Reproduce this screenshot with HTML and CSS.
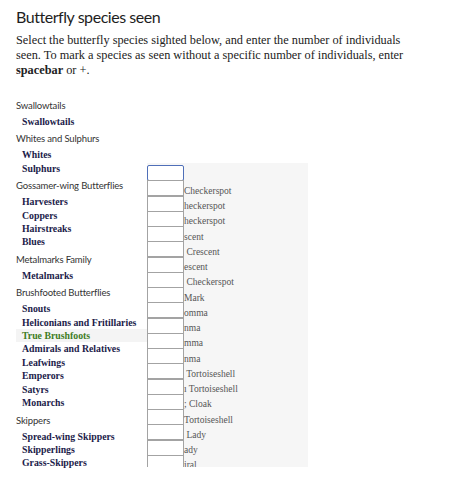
FILE: index.html
```html
<!DOCTYPE html>
<html lang="en">
<head>
<meta charset="utf-8">
<title>Butterfly species seen</title>
<link rel="stylesheet" href="styles.css">
</head>
<body>
<main class="page">
  <h1 class="title">Butterfly species seen</h1>
  <p class="intro">Select the butterfly species sighted below, and enter the number of individuals seen. To mark a species as seen without a specific number of individuals, enter <strong>spacebar</strong> or +.</p>

  <div class="picker">
    <div class="families">
      <div class="family">
        <div class="family-name">Swallowtails</div>
        <div class="sub">Swallowtails</div>
      </div>
      <div class="family">
        <div class="family-name">Whites and Sulphurs</div>
        <div class="sub">Whites</div>
        <div class="sub">Sulphurs</div>
      </div>
      <div class="family">
        <div class="family-name">Gossamer-wing Butterflies</div>
        <div class="sub">Harvesters</div>
        <div class="sub">Coppers</div>
        <div class="sub">Hairstreaks</div>
        <div class="sub">Blues</div>
      </div>
      <div class="family">
        <div class="family-name">Metalmarks Family</div>
        <div class="sub">Metalmarks</div>
      </div>
      <div class="family">
        <div class="family-name">Brushfooted Butterflies</div>
        <div class="sub">Snouts</div>
        <div class="sub">Heliconians and Fritillaries</div>
        <div class="sub sub-active">True Brushfoots</div>
        <div class="sub">Admirals and Relatives</div>
        <div class="sub">Leafwings</div>
        <div class="sub">Emperors</div>
        <div class="sub">Satyrs</div>
        <div class="sub">Monarchs</div>
      </div>
      <div class="family">
        <div class="family-name">Skippers</div>
        <div class="sub">Spread-wing Skippers</div>
        <div class="sub">Skipperlings</div>
        <div class="sub">Grass-Skippers</div>
      </div>
    </div>

    <div class="species-panel">
      <div class="species-row"><input class="count count-focus" type="text"><span class="species-name"></span></div>
      <div class="species-row"><input class="count" type="text"><span class="species-name">Checkerspot</span></div>
      <div class="species-row"><input class="count" type="text"><span class="species-name">heckerspot</span></div>
      <div class="species-row"><input class="count" type="text"><span class="species-name">heckerspot</span></div>
      <div class="species-row"><input class="count" type="text"><span class="species-name">scent</span></div>
      <div class="species-row"><input class="count" type="text"><span class="species-name"> Crescent</span></div>
      <div class="species-row"><input class="count" type="text"><span class="species-name">escent</span></div>
      <div class="species-row"><input class="count" type="text"><span class="species-name"> Checkerspot</span></div>
      <div class="species-row"><input class="count" type="text"><span class="species-name">Mark</span></div>
      <div class="species-row"><input class="count" type="text"><span class="species-name">omma</span></div>
      <div class="species-row"><input class="count" type="text"><span class="species-name">nma</span></div>
      <div class="species-row"><input class="count" type="text"><span class="species-name">mma</span></div>
      <div class="species-row"><input class="count" type="text"><span class="species-name">nma</span></div>
      <div class="species-row"><input class="count" type="text"><span class="species-name"> Tortoiseshell</span></div>
      <div class="species-row"><input class="count" type="text"><span class="species-name">ı Tortoiseshell</span></div>
      <div class="species-row"><input class="count" type="text"><span class="species-name">; Cloak</span></div>
      <div class="species-row"><input class="count" type="text"><span class="species-name">Tortoiseshell</span></div>
      <div class="species-row"><input class="count" type="text"><span class="species-name"> Lady</span></div>
      <div class="species-row"><input class="count" type="text"><span class="species-name">ady</span></div>
      <div class="species-row"><input class="count" type="text"><span class="species-name">iral</span></div>
      <div class="species-row"><input class="count" type="text"><span class="species-name"></span></div>
    </div>
  </div>
</main>
</body>
</html>
```

FILE: styles.css
```css
html, body {
  margin: 0;
  padding: 0;
  background: #ffffff;
}

.page {
  padding: 5px 16px 0 16px;
  color: #222222;
}

.title {
  margin: 0;
  font-family: "Lato", "Open Sans", sans-serif;
  font-weight: 400;
  font-size: 16px;
  letter-spacing: -0.45px;
  line-height: 24px;
  color: #1e1e1e;
}

.intro {
  margin: 4px 0 0 0;
  max-width: 392px;
  font-family: "Liberation Serif", "DejaVu Serif", serif;
  font-size: 12.3px;
  line-height: 15px;
  color: #222222;
}

.intro strong {
  font-weight: 700;
}

.picker {
  display: flex;
  align-items: flex-start;
  margin-top: 19px;
}

.families {
  width: 131px;
  flex: none;
}

.family + .family {
  margin-top: 2px;
}

.family-name {
  font-family: "Lato", "Open Sans", sans-serif;
  font-size: 9.5px;
  letter-spacing: -0.15px;
  line-height: 18px;
  color: #333333;
  white-space: nowrap;
}

.sub {
  padding-left: 6px;
  margin-right: -2px;
  font-family: "Liberation Serif", "DejaVu Serif", serif;
  font-weight: 700;
  font-size: 9.8px;
  line-height: 13.4px;
  color: #1c1c4a;
  white-space: nowrap;
}

.sub-active {
  color: #3f7d25;
  background: #f4f4f4;
}

.species-panel {
  flex: none;
  width: 161px;
  height: 304px;
  margin-top: 66px;
  padding-top: 2px;
  box-sizing: border-box;
  background: #f6f6f6;
  overflow: hidden;
}

.species-row {
  display: flex;
  align-items: flex-start;
  height: 15.25px;
}

.count {
  flex: none;
  box-sizing: border-box;
  width: 37px;
  height: 16px;
  margin: 0;
  padding: 0 3px;
  border: 1px solid #a3a3a3;
  border-radius: 0;
  background: #ffffff;
  font-size: 10px;
}

.count-focus {
  border: 1px solid #4f6fb8;
  border-radius: 2px;
  outline: none;
}

.species-name {
  margin-top: 3.5px;
  font-family: "Liberation Serif", "DejaVu Serif", serif;
  font-size: 9.5px;
  line-height: 15px;
  color: #555555;
  white-space: pre;
}
```
